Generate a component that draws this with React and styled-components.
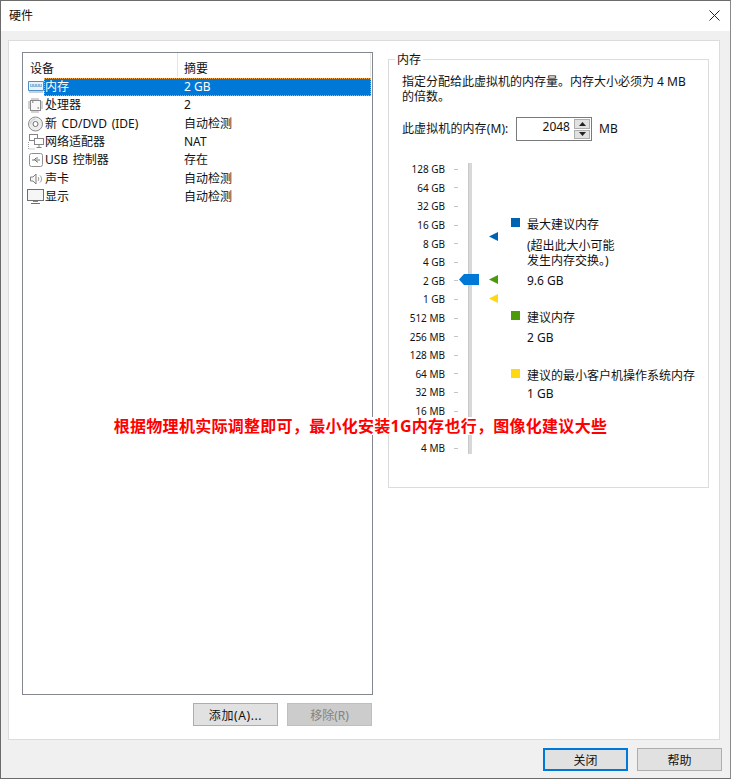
import React from "react";
import styled, { createGlobalStyle } from "styled-components";

const Global = createGlobalStyle`
  html, body { margin: 0; padding: 0; background: #f0f0f0; }
  body { font-family: "Noto Sans", "Noto Sans CJK SC", sans-serif; font-size: 12px; color: #111; }
  * { box-sizing: border-box; }
`;

const Window = styled.div`
  width: 731px; height: 779px; display: flex; flex-direction: column; position: relative;
  background: #f0f0f0; border: 1px solid #6b6b6b; border-right-color: #8a8a8a; overflow: hidden;
`;
const TitleBar = styled.header`
  height: 30px; flex: none; background: #fff; display: flex; align-items: center;
  justify-content: space-between; padding: 0 10px 2px 8px; font-size: 12px;
`;
const Content = styled.main`
  height: 700px; flex: none; margin: 9px 10px 0 7px; background: #fff; border: 1px solid #dcdcdc;
  display: flex; padding: 11px 10px 12px 13px; gap: 15px;
`;
const LeftColumn = styled.section`
  width: 351px; flex: none; display: flex; flex-direction: column;
`;
const ListBox = styled.div`
  height: 643px; flex: none; border: 1px solid #828790; background: #fff; padding-right: 1px;
`;
const ListHeader = styled.div`
  height: 25px; display: grid; grid-template-columns: 155px 1fr; border-bottom: 1px solid #fff;
`;
const HeaderCell = styled.div`
  display: flex; align-items: center; padding: 5px 0 0 ${p => p.$pad}px;
  border-right: 1px solid #e5e5e5; height: 24px;
`;
const Row = styled.div`
  height: 18.3px; display: flex; align-items: center; padding-left: 5px;
`;
const RowIcon = styled.svg`
  width: 17px; height: 16px; flex: none; display: block; margin-left: -1px;
`;
const RowBody = styled.div`
  flex: 1; height: 18px; display: flex; align-items: center; padding-left: 1px; line-height: 16px;
  background: ${p => (p.$selected ? "#0078d7" : "transparent")};
  color: ${p => (p.$selected ? "#fff" : "#111")};
  outline: ${p => (p.$selected ? "1px dotted #f6a546" : "none")};
  outline-offset: -1px;
`;
const RowName = styled.span`
  width: 139px; flex: none; white-space: nowrap; word-spacing: 1.5px;
`;
const ButtonRow = styled.div`
  display: flex; justify-content: flex-end; gap: 9px; margin-top: 8px; padding-right: 1px;
`;
const Button = styled.button`
  width: 85px; height: 23px; font: inherit; font-size: 12px; padding: 0;
  letter-spacing: ${p => (p.$wide ? "0.6px" : "0")};
  color: ${p => (p.$disabled ? "#838383" : "#111")};
  background: ${p => (p.$disabled ? "#ccc" : "#e1e1e1")};
  border: ${p => (p.$primary ? "2px solid #0078d7" : p.$disabled ? "1px solid #bfbfbf" : "1px solid #adadad")};
`;
const Group = styled.fieldset`
  width: 321px; height: 436px; flex: none; margin: 0; padding: 0 0 0 13px;
  border: 1px solid #dcdcdc; min-inline-size: 0;
`;
const GroupTitle = styled.legend`
  padding: 0 2px; margin-left: -7px; line-height: 14px; font-size: 12px; position: relative; top: 1px;
`;
const Description = styled.p`
  margin: 8px 0 0; width: 292px; line-height: 15px;
`;
const MemoryRow = styled.div`
  display: flex; align-items: center; height: 24px; margin-top: 13px;
`;
const MemoryLabel = styled.label`
  width: 114px; flex: none; white-space: nowrap; letter-spacing: 0.1px; margin-top: -2px;
`;
const Spinner = styled.div`
  width: 76px; height: 24px; border: 1px solid #7a7a7a; display: flex; background: #fff;
`;
const SpinnerValue = styled.div`
  flex: 1; text-align: right; padding: 1px 4px 0 0; line-height: 16px;
`;
const SpinnerButtons = styled.div`
  width: 17px; display: flex; flex-direction: column; padding: 1px 1px 1px 0; gap: 1px; background: #fff;
`;
const SpinnerButton = styled.div`
  flex: 1; background: #e1e1e1; border: 1px solid #adadad; display: flex; align-items: center; justify-content: center;
`;
const Unit = styled.span`
  margin: -2px 0 0 7px;
`;
const Slider = styled.div`
  display: flex; margin-top: 22px; height: 291px;
`;
const Scale = styled.div`
  width: 55px; flex: none; margin-left: 2px; margin-top: -3px;
`;
const ScaleRow = styled.div`
  height: 18.6px; display: flex; align-items: center; justify-content: flex-end; font-size: 10px; white-space: nowrap;
  &::after { content: ""; width: 4px; height: 1px; background: #c4c4c4; margin-left: 9px; margin-right: 1px; }
`;
const TrackArea = styled.div`
  width: 52px; flex: none; position: relative; padding-left: 9px;
`;
const Track = styled.div`
  width: 4px; height: 291px; background: #d8d8d8; border-left: 1px solid #c9c9c9;
`;
const Thumb = styled.svg`
  position: absolute; left: 0; top: 110px; width: 20px; height: 13px;
`;
const Pointer = styled.svg`
  position: absolute; left: 30px; top: ${p => p.$top}px; width: 9px; height: 9px;
`;
const Legend = styled.div`
  flex: 1; padding-top: 53px;
`;
const LegendTitle = styled.div`
  display: flex; align-items: center; gap: 7px; height: 16px; white-space: nowrap; margin-top: ${p => p.$top || 0}px;
`;
const Swatch = styled.i`
  width: 9px; height: 9px; flex: none; background: ${p => p.$color}; margin-top: -3px;
`;
const LegendText = styled.div`
  margin-left: 16px; line-height: 15px; margin-top: ${p => p.$top}px; white-space: nowrap;
`;
const Footer = styled.footer`
  flex: 1; display: flex; justify-content: flex-end; gap: 9px; padding: 8px 8px 0 0;
`;
const Annotation = styled.div`
  position: absolute; left: 111px; top: 416px; width: 497px; height: 18px; background: #fff;
  color: #ff0000; font-size: 16px; font-weight: 700; line-height: 18px; text-align: center; white-space: nowrap; letter-spacing: 0.28px;
`;

const icons = {
  ram: <><path d="M1.5 2.5h15v9h-15z" fill="#e6f1fa" stroke="#4f8fc7" /><path d="M3 5h12v3H3z" fill="#8fb8dc" /><path d="M4 6h1M7 6h1M10 6h1M13 6h1" stroke="#fff" /><path d="M2 13h14" stroke="#8ba3b8" /></>,
  cpu: <><rect x="3.5" y="3.5" width="10" height="10" fill="#f8f8f8" stroke="#8a8a8a" /><path d="M5 1v2M7 1v2M9 1v2M11 1v2M5 14v2M7 14v2M9 14v2M11 14v2M1 5h2M1 7h2M1 9h2M1 11h2M14 5h2M14 7h2M14 9h2M14 11h2" stroke="#a5a5a5" /><path d="M5 5h1.5M10.5 11h1.5" stroke="#555" /></>,
  cd: <><circle cx="8.5" cy="8" r="7" fill="#ededed" stroke="#8c8c8c" /><circle cx="8.5" cy="8" r="2.5" fill="#fff" stroke="#707070" /><path d="M3.5 8a5 5 0 0 1 5-5" fill="none" stroke="#c8c8c8" /></>,
  net: <><rect x="2.5" y="0.5" width="8" height="6" fill="#fff" stroke="#858585" /><rect x="7.5" y="4.5" width="9" height="6" fill="#fff" stroke="#858585" /><path d="M12 11v2M9.5 13.5h5" fill="none" stroke="#858585" /><path d="M1.5 8v7h6" fill="none" stroke="#a0a0a0" strokeDasharray="1 1" /></>,
  usb: <><rect x="2.5" y="1.5" width="13" height="13" rx="2" fill="#fff" stroke="#8f8f8f" /><path d="M5 8h8M7 8l2-2h2M8 8l2 2h1" fill="none" stroke="#777" /></>,
  sound: <><path d="M3.5 6h2.5l3-3v10l-3-3H3.5z" fill="#f6f6f6" stroke="#808080" /><path d="M11 6c1 1 1 3 0 4M13 4.5c2 2 2 5 0 7" fill="none" stroke="#999" /></>,
  screen: <><rect x="0.5" y="0.5" width="16" height="11" fill="#f6f6f6" stroke="#707070" /><path d="M6 12.5h5" stroke="#8a8a8a" /><path d="M4 14.5h9" stroke="#707070" /></>,
};

const devices = [
  ["ram", "内存", "2 GB"],
  ["cpu", "处理器", "2"],
  ["cd", "新 CD/DVD (IDE)", "自动检测"],
  ["net", "网络适配器", "NAT"],
  ["usb", "USB 控制器", "存在"],
  ["sound", "声卡", "自动检测"],
  ["screen", "显示", "自动检测"],
];
const scale = ["128 GB", "64 GB", "32 GB", "16 GB", "8 GB", "4 GB", "2 GB", "1 GB", "512 MB", "256 MB", "128 MB", "64 MB", "32 MB", "16 MB", "8 MB", "4 MB"];

export default function App() {
  return (
    <>
      <Global />
      <Window>
        <TitleBar>
          <span>硬件</span>
          <svg width="11" height="11" viewBox="0 0 11 11"><path d="M.5.5l10 10M10.5.5l-10 10" stroke="#222" fill="none" /></svg>
        </TitleBar>
        <Content>
          <LeftColumn>
            <ListBox>
              <ListHeader>
                <HeaderCell $pad={7}>设备</HeaderCell>
                <HeaderCell $pad={6}>摘要</HeaderCell>
              </ListHeader>
              {devices.map(([icon, name, summary], i) => (
                <Row key={name}>
                  <RowIcon viewBox="0 0 17 16">{icons[icon]}</RowIcon>
                  <RowBody $selected={i === 0}>
                    <RowName>{name}</RowName>
                    <span>{summary}</span>
                  </RowBody>
                </Row>
              ))}
            </ListBox>
            <ButtonRow>
              <Button $wide>添加(A)...</Button>
              <Button $disabled>移除(R)</Button>
            </ButtonRow>
          </LeftColumn>
          <Group>
            <GroupTitle>内存</GroupTitle>
            <Description>指定分配给此虚拟机的内存量。内存大小必须为 4 MB 的倍数。</Description>
            <MemoryRow>
              <MemoryLabel>此虚拟机的内存(M):</MemoryLabel>
              <Spinner>
                <SpinnerValue>2048</SpinnerValue>
                <SpinnerButtons>
                  <SpinnerButton><svg width="7" height="4" viewBox="0 0 7 4"><path d="M3.5 0L7 4H0z" fill="#222" /></svg></SpinnerButton>
                  <SpinnerButton><svg width="7" height="4" viewBox="0 0 7 4"><path d="M0 0h7L3.5 4z" fill="#222" /></svg></SpinnerButton>
                </SpinnerButtons>
              </Spinner>
              <Unit>MB</Unit>
            </MemoryRow>
            <Slider>
              <Scale>
                {scale.map(s => <ScaleRow key={s}>{s}</ScaleRow>)}
              </Scale>
              <TrackArea>
                <Track />
                <Thumb viewBox="0 0 20 13"><path d="M0 6.5L5 1h15v11H5z" fill="#0078d7" /></Thumb>
                <Pointer $top={69} viewBox="0 0 9 9"><path d="M0 4.5L9 0v9z" fill="#0063b1" /></Pointer>
                <Pointer $top={112} viewBox="0 0 9 9"><path d="M0 4.5L9 0v9z" fill="#4a9a0a" /></Pointer>
                <Pointer $top={131} viewBox="0 0 9 9"><path d="M0 4.5L9 0v9z" fill="#ffd80f" /></Pointer>
              </TrackArea>
              <Legend>
                <LegendTitle><Swatch $color="#0063b1" />最大建议内存</LegendTitle>
                <LegendText $top={6}>(超出此大小可能<br />发生内存交换。)</LegendText>
                <LegendText $top={5}>9.6 GB</LegendText>
                <LegendTitle $top={21}><Swatch $color="#4a9a0a" />建议内存</LegendTitle>
                <LegendText $top={5}>2 GB</LegendText>
                <LegendTitle $top={22}><Swatch $color="#ffd80f" />建议的最小客户机操作系统内存</LegendTitle>
                <LegendText $top={3}>1 GB</LegendText>
              </Legend>
            </Slider>
          </Group>
        </Content>
        <Footer>
          <Button $primary>关闭</Button>
          <Button>帮助</Button>
        </Footer>
        <Annotation>根据物理机实际调整即可，最小化安装1G内存也行，图像化建议大些</Annotation>
      </Window>
    </>
  );
}
